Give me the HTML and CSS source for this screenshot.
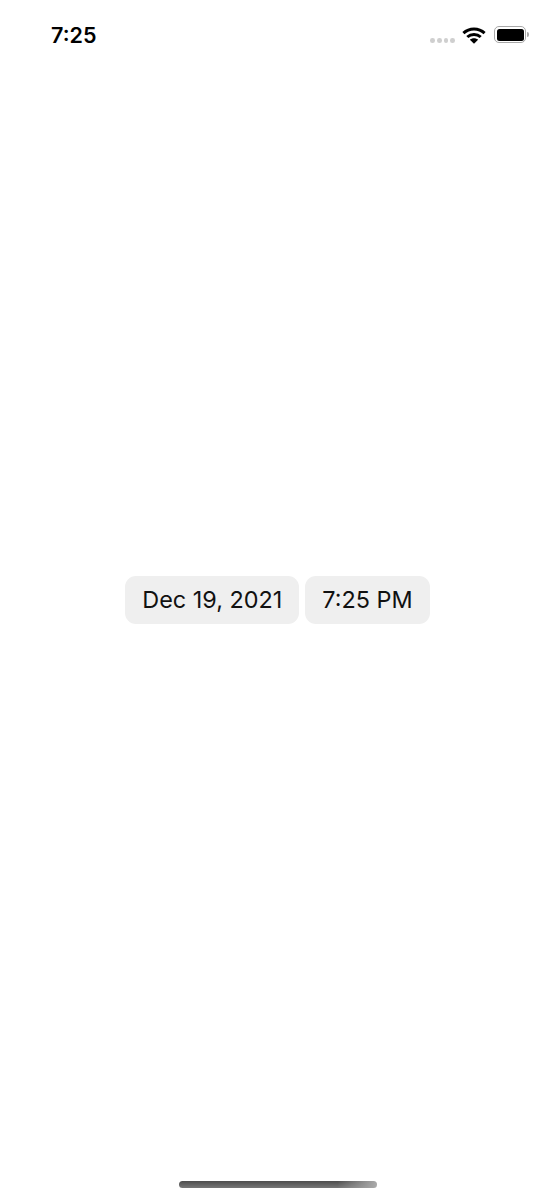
FILE: index.html
```html
<!DOCTYPE html>
<html lang="en">
<head>
<meta charset="utf-8">
<title>Date Picker</title>
<link rel="stylesheet" href="styles.css">
</head>
<body>
<div class="screen">
  <header class="status">
    <span class="clock">7:25</span>
    <div class="indicators">
      <div class="signal"><i></i><i></i><i></i><i></i></div>
      <svg class="wifi" width="24" height="17" viewBox="0 0 24 17"><path fill="none" stroke="#000" stroke-width="3" d="M1.400 6.200C7.300.6 16.700.6 22.600 6.200M5.300 10C9 6.500 15 6.500 18.700 10"/><path d="M12 16.800 7.900 12.700C10.200 10.700 13.800 10.700 16.100 12.700Z"/></svg>
      <div class="battery"><div class="cell"><div class="charge"></div></div><div class="cap"></div></div>
    </div>
  </header>
  <main class="content">
    <div class="pickers">
      <button class="pill">Dec 19, 2021</button>
      <button class="pill">7:25 PM</button>
    </div>
  </main>
  <footer class="home"><div class="indicator"></div></footer>
</div>
</body>
</html>
```
FILE: styles.css
```css
* { box-sizing: border-box; }
html, body { margin: 0; padding: 0; background: #fff; }
.screen { width: 555px; height: 1200px; display: flex; flex-direction: column; font-family: Inter, "Liberation Sans", sans-serif; color: #000; }
.status { height: 70px; flex: none; display: flex; justify-content: space-between; align-items: flex-start; padding: 22px 26px 0 51px; }
.clock { font-size: 21.500px; line-height: 26px; font-weight: 600; }
.indicators { display: flex; align-items: flex-start; padding-top: 4px; }
.signal { display: flex; gap: 2px; margin: 12px 7px 0 0; }
.signal i { width: 4.750px; height: 4.750px; border-radius: 50%; background: #cfcfcf; }
.wifi { margin: 1px 8px 0 0; }
.battery { display: flex; align-items: center; }
.cell { width: 32px; height: 17px; border: 1.500px solid #a8a8a8; border-radius: 5px; padding: 1.500px; }
.charge { width: 100%; height: 100%; background: #000; border-radius: 2.500px; }
.cap { width: 2px; height: 5px; margin-left: 1px; background: #a8a8a8; border-radius: 0 2px 2px 0; }
.content { flex: 1; display: flex; justify-content: center; align-items: flex-start; padding-top: 506px; }
.pickers { display: flex; gap: 6px; }
.pill { height: 48px; padding: 0 17px; border: 0; border-radius: 11px; background: #efefef; font: 400 23.400px/48px Inter, "Liberation Sans", sans-serif; color: #111; }
.home { height: 30px; flex: none; display: flex; justify-content: center; }
.indicator { width: 198px; height: 7px; margin-top: 11px; border-radius: 4px; background: linear-gradient(90deg, transparent 80%, #aaa 100%), linear-gradient(180deg, #4d4d4d 0%, #777 100%); }
```
